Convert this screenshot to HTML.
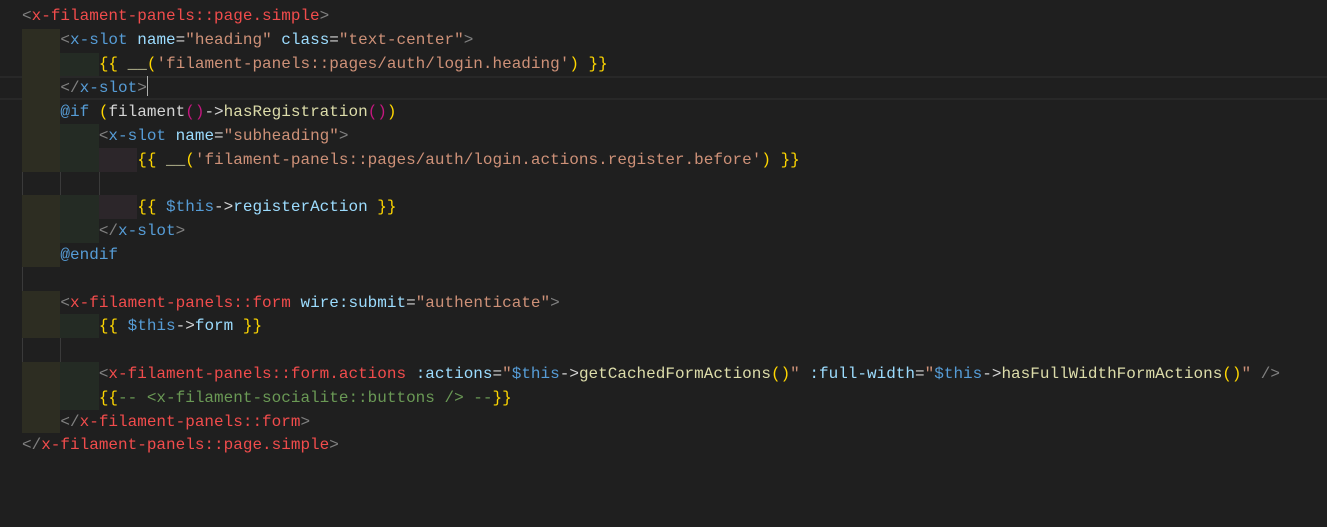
<!DOCTYPE html>
<html><head><meta charset="utf-8"><style>
html,body{margin:0;padding:0;background:#1f1f1f;width:1327px;height:527px;overflow:hidden}
.b{position:absolute;height:23.8px}
.Y{background:#2d2d22}.G{background:#242b24}.P{background:#2c262a}
.v{position:absolute;width:1px;background:#3a3a3a}
#code{position:absolute;left:22px;top:5px;font-family:"Liberation Mono",monospace;font-size:16px;line-height:23.8px;white-space:pre;color:#d4d4d4}
.g{color:#808080}.r{color:#f14c4c}.bl{color:#569cd6}.a{color:#9cdcfe}.s{color:#ce9178}.y{color:#ffd700}.o{color:#da70d6}.pk{color:#d4d4d4}.f{color:#dcdcaa}.c{color:#6a9955}.w{color:#d4d4d4}.lb{color:#9cdcfe}
.cur{position:absolute;left:0;width:1327px;top:76.4px;height:23.8px;box-sizing:border-box;border-top:2px solid #282828;border-bottom:2px solid #282828}
</style></head><body>
<div class="cur"></div>
<!-- indent blocks -->
<div class="b Y" style="left:22px;width:38px;top:28.8px;height:71.4px"></div>
<div class="b G" style="left:60px;width:39px;top:52.6px"></div>
<div class="b Y" style="left:22px;width:38px;top:100.2px;height:71.4px"></div>
<div class="b G" style="left:60px;width:39px;top:124px;height:47.6px"></div>
<div class="b P" style="left:99px;width:38px;top:147.8px"></div>
<div class="b Y" style="left:22px;width:38px;top:195.4px;height:71.4px"></div>
<div class="b G" style="left:60px;width:39px;top:195.4px;height:47.6px"></div>
<div class="b P" style="left:99px;width:38px;top:195.4px"></div>
<div class="v" style="left:22px;top:171.6px;height:23.8px"></div>
<div class="v" style="left:60px;top:171.6px;height:23.8px"></div>
<div class="v" style="left:99px;top:171.6px;height:23.8px"></div>
<div class="v" style="left:22px;top:267px;height:23.8px"></div>
<div class="b Y" style="left:22px;width:38px;top:290.6px;height:47.6px"></div>
<div class="b G" style="left:60px;width:39px;top:314.4px"></div>
<div class="v" style="left:22px;top:338.2px;height:23.8px"></div>
<div class="v" style="left:60px;top:338.2px;height:23.8px"></div>
<div class="b Y" style="left:22px;width:38px;top:362px;height:71.4px"></div>
<div class="b G" style="left:60px;width:39px;top:362px;height:47.6px"></div>
<div id="code"><span class="g">&lt;</span><span class="r">x-filament-panels::page.simple</span><span class="g">&gt;</span>
    <span class="g">&lt;</span><span class="bl">x-slot</span> <span class="a">name</span>=<span class="s">"heading"</span> <span class="a">class</span>=<span class="s">"text-center"</span><span class="g">&gt;</span>
        <span class="y">{{</span> <span class="f">__</span><span class="y">(</span><span class="s">'filament-panels::pages/auth/login.heading'</span><span class="y">)</span> <span class="y">}}</span>
    <span class="g">&lt;/</span><span class="bl">x-slot</span><span class="g">&gt;</span><span style="display:inline-block;width:1px;height:20px;background:#aeafad;vertical-align:-4px"></span>
    <span class="bl">@if</span> <span class="y">(</span>filament<span class="o" style="color:#c3177e">()</span>-&gt;<span class="f">hasRegistration</span><span class="o" style="color:#c3177e">()</span><span class="y">)</span>
        <span class="g">&lt;</span><span class="bl">x-slot</span> <span class="a">name</span>=<span class="s">"subheading"</span><span class="g">&gt;</span>
            <span class="y">{{</span> <span class="f">__</span><span class="y">(</span><span class="s">'filament-panels::pages/auth/login.actions.register.before'</span><span class="y">)</span> <span class="y">}}</span>

            <span class="y">{{</span> <span class="bl">$this</span>-&gt;<span class="lb">registerAction</span> <span class="y">}}</span>
        <span class="g">&lt;/</span><span class="bl">x-slot</span><span class="g">&gt;</span>
    <span class="bl">@endif</span>

    <span class="g">&lt;</span><span class="r">x-filament-panels::form</span> <span class="a">wire:submit</span>=<span class="s">"authenticate"</span><span class="g">&gt;</span>
        <span class="y">{{</span> <span class="bl">$this</span>-&gt;<span class="lb">form</span> <span class="y">}}</span>

        <span class="g">&lt;</span><span class="r">x-filament-panels::form.actions</span> <span class="a">:actions</span>=<span class="s">"</span><span class="bl">$this</span>-&gt;<span class="f">getCachedFormActions</span><span class="y">()</span><span class="s">"</span> <span class="a">:full-width</span>=<span class="s">"</span><span class="bl">$this</span>-&gt;<span class="f">hasFullWidthFormActions</span><span class="y">()</span><span class="s">"</span> <span class="g">/&gt;</span>
        <span class="y">{{</span><span class="c">-- &lt;x-filament-socialite::buttons /&gt; --</span><span class="y">}}</span>
    <span class="g">&lt;/</span><span class="r">x-filament-panels::form</span><span class="g">&gt;</span>
<span class="g">&lt;/</span><span class="r">x-filament-panels::page.simple</span><span class="g">&gt;</span></div>
</body></html>
